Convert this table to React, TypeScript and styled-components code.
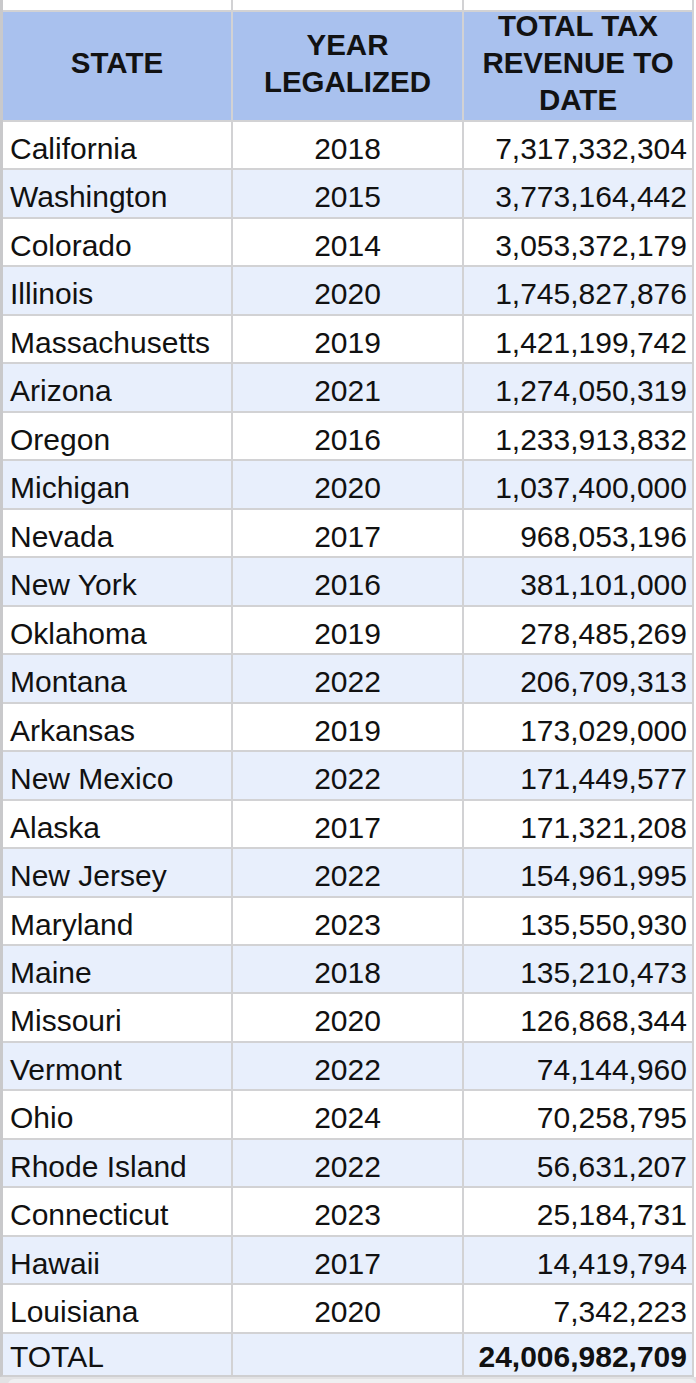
import React from "react";
import styled, { createGlobalStyle } from "styled-components";

const GlobalStyle = createGlobalStyle`
  html, body {
    margin: 0;
    padding: 0;
    background: #ffffff;
  }
  body {
    font-family: "Liberation Sans", Arial, sans-serif;
    color: #111111;
  }
`;

const rows: [string, number, string][] = [
  ["California", 2018, "7,317,332,304"],
  ["Washington", 2015, "3,773,164,442"],
  ["Colorado", 2014, "3,053,372,179"],
  ["Illinois", 2020, "1,745,827,876"],
  ["Massachusetts", 2019, "1,421,199,742"],
  ["Arizona", 2021, "1,274,050,319"],
  ["Oregon", 2016, "1,233,913,832"],
  ["Michigan", 2020, "1,037,400,000"],
  ["Nevada", 2017, "968,053,196"],
  ["New York", 2016, "381,101,000"],
  ["Oklahoma", 2019, "278,485,269"],
  ["Montana", 2022, "206,709,313"],
  ["Arkansas", 2019, "173,029,000"],
  ["New Mexico", 2022, "171,449,577"],
  ["Alaska", 2017, "171,321,208"],
  ["New Jersey", 2022, "154,961,995"],
  ["Maryland", 2023, "135,550,930"],
  ["Maine", 2018, "135,210,473"],
  ["Missouri", 2020, "126,868,344"],
  ["Vermont", 2022, "74,144,960"],
  ["Ohio", 2024, "70,258,795"],
  ["Rhode Island", 2022, "56,631,207"],
  ["Connecticut", 2023, "25,184,731"],
  ["Hawaii", 2017, "14,419,794"],
  ["Louisiana", 2020, "7,342,223"],
];

const Sheet = styled.div`
  display: grid;
  grid-template-columns: 228px 229px 228px;
  grid-template-rows: 10px 108px repeat(25, 46.48px) 41px;
  gap: 2px;
  background: #d2d2d4;
  border-left: 3px solid #c9c9cb;
  border-right: 2px solid #d2d2d4;
  border-bottom: 2px solid #cfcfd1;
  width: max-content;
`;

const Blank = styled.div`
  background: #ffffff;
`;

const HeadCell = styled.div`
  background: #a9c1ee;
  display: flex;
  align-items: center;
  justify-content: center;
  text-align: center;
  font-weight: bold;
  font-size: 29.5px;
  line-height: 37px;
  color: #121212;
  padding-bottom: 7px;
`;

type Align = "left" | "center" | "right";

const Cell = styled.div<{ $shade: boolean; $align: Align; $bold?: boolean }>`
  background: ${(p) => (p.$shade ? "#e8effc" : "#ffffff")};
  font-size: 30px;
  line-height: 46px;
  padding-top: 4px;
  text-align: ${(p) => p.$align};
  font-weight: ${(p) => (p.$bold ? "bold" : "normal")};
  padding-left: ${(p) => (p.$align === "left" ? "7px" : "0")};
  padding-right: ${(p) => (p.$align === "right" ? "5px" : "0")};
  white-space: nowrap;
  overflow: hidden;
  color: #111111;
`;

const TotalCell = styled(Cell)`
  line-height: 36px;
  padding-top: 5px;
`;

const TabBar = styled.div`
  background: #e2e2e4;
  height: 5px;
  padding: 2px 0 0 8px;
`;

const TabBox = styled.div`
  background: #efeff1;
  height: 10px;
  border-radius: 6px 6px 0 0;
`;

export default function App() {
  return (
    <>
      <GlobalStyle />
      <Sheet>
        <Blank />
        <Blank />
        <Blank />
        <HeadCell>STATE</HeadCell>
        <HeadCell>
          YEAR
          <br />
          LEGALIZED
        </HeadCell>
        <HeadCell>
          TOTAL TAX
          <br />
          REVENUE TO
          <br />
          DATE
        </HeadCell>
        {rows.map(([state, year, total], i) => (
          <React.Fragment key={state}>
            <Cell $shade={i % 2 === 1} $align="left">
              {state}
            </Cell>
            <Cell $shade={i % 2 === 1} $align="center">
              {year}
            </Cell>
            <Cell $shade={i % 2 === 1} $align="right">
              {total}
            </Cell>
          </React.Fragment>
        ))}
        <TotalCell $shade $align="left">
          TOTAL
        </TotalCell>
        <TotalCell $shade $align="center" />
        <TotalCell $shade $align="right" $bold>
          24,006,982,709
        </TotalCell>
      </Sheet>
      <TabBar>
        <TabBox />
      </TabBar>
    </>
  );
}
